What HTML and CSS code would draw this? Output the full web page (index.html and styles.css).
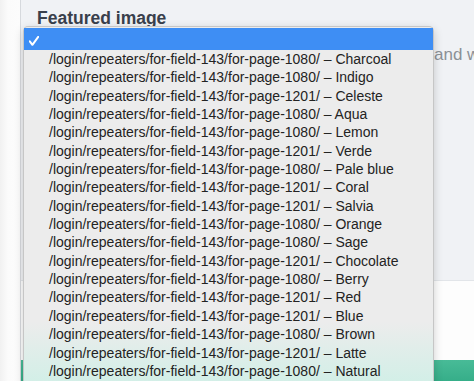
FILE: index.html
```html
<!DOCTYPE html>
<html lang="en">
<head>
<meta charset="utf-8">
<title>Featured image</title>
<link rel="stylesheet" href="styles.css">
</head>
<body>
<div class="page">
  <aside class="rail"></aside>
  <main class="main">
    <section class="panel">
      <h2 class="title">Featured image</h2>
      <p class="desc">and w</p>
    </section>
    <section class="blank"></section>
    <footer class="bar"></footer>
  </main>
  <div class="menu">
    <div class="opt selected"><svg class="check" width="10" height="10" viewBox="0 0 10 10"><path d="M0.8 5.4 L3.4 8.8 L9.2 0.9" fill="none" stroke="#fff" stroke-width="2" stroke-linecap="round" stroke-linejoin="round"/></svg></div>
    <div class="opt">/login/repeaters/for-field-143/for-page-1080/ – Charcoal</div>
    <div class="opt">/login/repeaters/for-field-143/for-page-1080/ – Indigo</div>
    <div class="opt">/login/repeaters/for-field-143/for-page-1201/ – Celeste</div>
    <div class="opt">/login/repeaters/for-field-143/for-page-1080/ – Aqua</div>
    <div class="opt">/login/repeaters/for-field-143/for-page-1080/ – Lemon</div>
    <div class="opt">/login/repeaters/for-field-143/for-page-1201/ – Verde</div>
    <div class="opt">/login/repeaters/for-field-143/for-page-1080/ – Pale blue</div>
    <div class="opt">/login/repeaters/for-field-143/for-page-1201/ – Coral</div>
    <div class="opt">/login/repeaters/for-field-143/for-page-1201/ – Salvia</div>
    <div class="opt">/login/repeaters/for-field-143/for-page-1080/ – Orange</div>
    <div class="opt">/login/repeaters/for-field-143/for-page-1080/ – Sage</div>
    <div class="opt">/login/repeaters/for-field-143/for-page-1201/ – Chocolate</div>
    <div class="opt">/login/repeaters/for-field-143/for-page-1080/ – Berry</div>
    <div class="opt">/login/repeaters/for-field-143/for-page-1201/ – Red</div>
    <div class="opt">/login/repeaters/for-field-143/for-page-1201/ – Blue</div>
    <div class="opt">/login/repeaters/for-field-143/for-page-1080/ – Brown</div>
    <div class="opt">/login/repeaters/for-field-143/for-page-1201/ – Latte</div>
    <div class="opt">/login/repeaters/for-field-143/for-page-1080/ – Natural</div>
  </div>
</div>
</body>
</html>
```
FILE: styles.css
```css
html, body {
  margin: 0;
  padding: 0;
}
body {
  font-family: "Liberation Sans", Arial, sans-serif;
  background: #f0f2f5;
}
.page {
  position: relative;
  display: flex;
  width: 474px;
  height: 381px;
  overflow: hidden;
}
.rail {
  width: 20px;
  flex: none;
  background: linear-gradient(to right, #f1f1f1, #fbfbfb 8px, #fcfcfc);
  border-right: 1px solid #d6d9dd;
}
.main {
  flex: 1;
  display: flex;
  flex-direction: column;
}
.panel {
  height: 272px;
  flex: none;
  background: #f0f2f5;
  border-bottom: 1px solid #e2e5e9;
  padding: 8px 0 0 16px;
  box-sizing: content-box;
}
.title {
  margin: 0;
  font-size: 17.5px;
  line-height: 20px;
  font-weight: bold;
  color: #39404c;
}
.desc {
  margin: 17px 0 0 397px;
  font-size: 17px;
  line-height: 20px;
  color: #8b9096;
  white-space: nowrap;
}
.blank {
  flex: 1;
  background: #fdfdfd;
}
.bar {
  height: 21px;
  flex: none;
  background: linear-gradient(#48bb97, #36ae89);
}
.menu {
  position: absolute;
  left: 23px;
  top: 26px;
  width: 409px;
  height: 380px;
  padding-top: 1px;
  border: 1px solid #c6c6c6;
  border-bottom: none;
  border-radius: 5px 5px 0 0;
  background: linear-gradient(to bottom, #ececec 0, #ececec 295px, #d2efe7 356px);
  box-shadow: 0 3px 10px rgba(0, 0, 0, 0.18);
}
.opt {
  height: 18.35px;
  line-height: 18.35px;
  padding-left: 25px;
  font-size: 14px;
  color: #232323;
  white-space: nowrap;
}
.opt.selected {
  height: 22px;
  padding-left: 5px;
  background: #3e8ef4;
  display: flex;
  align-items: flex-start;
}
.check {
  margin-top: 8px;
}
```
